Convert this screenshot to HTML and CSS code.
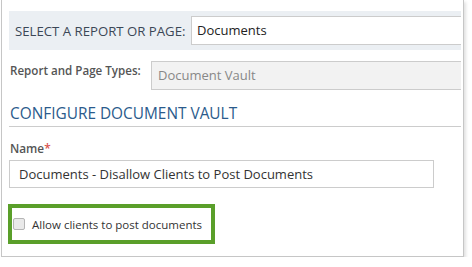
FILE: index.html
```html
<!DOCTYPE html>
<html>
<head>
<meta charset="utf-8">
<link rel="stylesheet" href="styles.css">
</head>
<body>
<div class="panel">
  <div class="band">
    <span class="band-label">SELECT A REPORT OR PAGE:</span>
    <div class="select-box">Documents</div>
  </div>
  <div class="type-row">
    <span class="type-label">Report and Page Types:</span>
    <div class="type-box">Document Vault</div>
  </div>
  <h2 class="heading">CONFIGURE DOCUMENT VAULT</h2>
  <div class="name-label">Name<span class="req">*</span></div>
  <div class="name-box">Documents - Disallow Clients to Post Documents</div>
  <div class="check-wrap">
    <span class="check"></span>
    <span class="check-text">Allow clients to post documents</span>
  </div>
</div>
</body>
</html>
```

FILE: styles.css
```css
html, body {
  margin: 0;
  padding: 0;
  background: #ffffff;
}
body {
  font-family: "Open Sans", "Noto Sans", sans-serif;
  color: #333333;
}
.panel {
  margin-left: 1px;
  width: 452px;
  height: 256px;
  padding: 0 2px 0 7px;
  border-left: 1px solid #c6c6c6;
  border-right: 1px solid #c6c6c6;
  border-bottom: 1px solid #c6c6c6;
  box-shadow: 2px 2px 3px rgba(0, 0, 0, 0.12);
  box-sizing: content-box;
  overflow: hidden;
}
.band {
  margin-top: 11px;
  height: 39px;
  background: #ebeff3;
  display: flex;
  align-items: center;
  padding-left: 6px;
}
.band-label {
  font-size: 13.2px;
  color: #3b4756;
  width: 176px;
  white-space: nowrap;
}
.select-box {
  flex: 1;
  height: 27px;
  border: 1px solid #cccccc;
  border-right: none;
  background: #ffffff;
  font-size: 13px;
  color: #222222;
  line-height: 27px;
  padding-left: 5px;
}
.type-row {
  display: flex;
  margin-top: 11px;
  padding-left: 1px;
}
.type-label {
  font-size: 11.6px;
  font-weight: 600;
  color: #555555;
  width: 141px;
  padding-top: 2px;
  white-space: nowrap;
}
.type-box {
  flex: 1;
  height: 27px;
  border: 1px solid #cccccc;
  border-right: none;
  background: #f2f2f2;
  font-size: 13px;
  color: #888888;
  line-height: 27px;
  padding-left: 6px;
}
.heading {
  margin: 14px 0 0 0;
  padding: 0 0 2px 1px;
  font-size: 15.4px;
  font-weight: 400;
  color: #2b5b8c;
  border-bottom: 1px solid #cccccc;
  line-height: 20px;
}
.name-label {
  margin-top: 13px;
  padding-left: 1px;
  font-size: 11.8px;
  font-weight: 600;
  color: #555555;
  line-height: 16px;
}
.req {
  color: #d9534f;
}
.name-box {
  margin-top: 4px;
  width: 414px;
  height: 26px;
  border: 1px solid #cccccc;
  font-size: 13px;
  color: #333333;
  line-height: 26px;
  padding-left: 9px;
}
.check-wrap {
  margin-top: 16px;
  margin-left: -1px;
  width: 198px;
  height: 32px;
  border: 4px solid #5a9f2a;
  display: flex;
  align-items: center;
  padding-left: 1px;
}
.check {
  width: 10px;
  height: 10px;
  border: 1px solid #b5b5b5;
  border-radius: 2px;
  background: #e9e9e9;
  margin-right: 7px;
}
.check-text {
  font-size: 11.5px;
  color: #333333;
}
```
